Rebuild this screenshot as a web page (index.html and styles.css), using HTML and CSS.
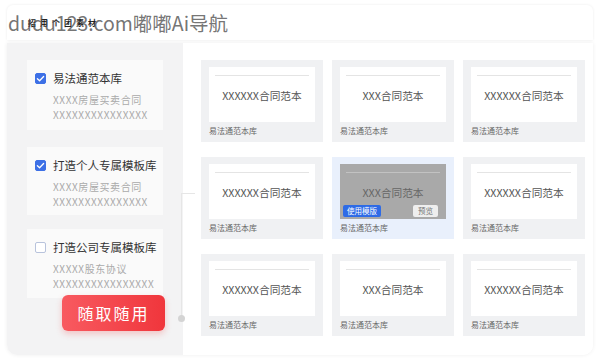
FILE: index.html
```html
<!DOCTYPE html>
<html lang="zh">
<head>
<meta charset="utf-8">
<link rel="stylesheet" href="styles.css">
</head>
<body>
<div class="app">
  <div class="header">
    <span class="htitle">招用个团素材</span>
    <span class="watermark">dudu123.com嘟嘟Ai导航</span>
  </div>
  <div class="main">
    <div class="left">
      <div class="card">
        <div class="ctitle"><span class="cb on"><svg viewBox="0 0 12 12" width="11" height="11"><path d="M2.6 6.2 L5 8.4 L9.4 3.8" fill="none" stroke="#fff" stroke-width="1.4" stroke-linecap="round" stroke-linejoin="round"/></svg></span>易法通范本库</div>
        <div class="csub">XXXX房屋买卖合同</div>
        <div class="csub">XXXXXXXXXXXXXXX</div>
      </div>
      <div class="card">
        <div class="ctitle"><span class="cb on"><svg viewBox="0 0 12 12" width="11" height="11"><path d="M2.6 6.2 L5 8.4 L9.4 3.8" fill="none" stroke="#fff" stroke-width="1.4" stroke-linecap="round" stroke-linejoin="round"/></svg></span>打造个人专属模板库</div>
        <div class="csub">XXXX房屋买卖合同</div>
        <div class="csub">XXXXXXXXXXXXXXX</div>
      </div>
      <div class="card">
        <div class="ctitle"><span class="cb"></span>打造公司专属模板库</div>
        <div class="csub">XXXXX股东协议</div>
        <div class="csub">XXXXXXXXXXXXXXXX</div>
      </div>
      <div class="btn">随取随用</div>
    </div>
    <div class="right">
      <div class="grid">
        <div class="tile"><div class="paper"><div class="pline"></div><div class="ptext">XXXXXX合同范本</div></div><div class="cap">易法通范本库</div></div>
        <div class="tile"><div class="paper"><div class="pline"></div><div class="ptext">XXX合同范本</div></div><div class="cap">易法通范本库</div></div>
        <div class="tile"><div class="paper"><div class="pline"></div><div class="ptext">XXXXXX合同范本</div></div><div class="cap">易法通范本库</div></div>
        <div class="tile"><div class="paper"><div class="pline"></div><div class="ptext">XXXXXX合同范本</div></div><div class="cap">易法通范本库</div></div>
        <div class="tile active"><div class="paper"><div class="pline"></div><div class="ptext">XXX合同范本</div><div class="acts"><span class="use">使用模版</span><span class="pre">预览</span></div></div><div class="cap">易法通范本库</div></div>
        <div class="tile"><div class="paper"><div class="pline"></div><div class="ptext">XXXXXX合同范本</div></div><div class="cap">易法通范本库</div></div>
        <div class="tile"><div class="paper"><div class="pline"></div><div class="ptext">XXXXXX合同范本</div></div><div class="cap">易法通范本库</div></div>
        <div class="tile"><div class="paper"><div class="pline"></div><div class="ptext">XXX合同范本</div></div><div class="cap">易法通范本库</div></div>
        <div class="tile"><div class="paper"><div class="pline"></div><div class="ptext">XXXXXX合同范本</div></div><div class="cap">易法通范本库</div></div>
      </div>
    </div>
    <div class="connector"><span class="dot"></span></div>
  </div>
</div>
</body>
</html>
```
FILE: styles.css
```css
* { box-sizing: border-box; }
html, body { margin: 0; padding: 0; background: #fff; }
body { font-family: "Noto Sans CJK SC", "Noto Sans", sans-serif; width: 600px; height: 360px; overflow: hidden; }
.app { width: 586px; margin: 5px 0 0 7px; }
.header {
  position: relative;
  height: 35px;
  background: #fff;
  border-radius: 6px 6px 0 0;
  box-shadow: 0 0 3px rgba(0,0,0,0.08);
  padding: 13px 0 0 21px;
}
.htitle { font-size: 8px; font-weight: 700; color: #222; letter-spacing: 4px; line-height: 10px; display: block; }
.watermark {
  position: absolute; left: 1px; top: 4px;
  font-family: "Noto Sans CJK SC", sans-serif;
  font-size: 19.5px; color: rgba(80,80,80,0.8); line-height: 28px; white-space: nowrap;
}
.main {
  position: relative;
  margin-top: 3px;
  height: 312px;
  display: flex;
  box-shadow: 0 0 4px rgba(0,0,0,0.07);
  border-radius: 0 0 10px 10px;
}
.left {
  width: 176px;
  background: #f3f3f4;
  border-radius: 0 0 0 10px;
  padding: 17px 0 0 20px;
  display: flex; flex-direction: column;
}
.card {
  width: 136px;
  background: #fafafa;
  padding: 10px 0 0 8px;
  margin-bottom: 17px;
}
.card:nth-child(1) { height: 70px; }
.card:nth-child(2) { height: 68px; margin-bottom: 14px; }
.card:nth-child(3) { height: 69px; margin-bottom: 0; }
.ctitle { display: flex; align-items: center; font-size: 11.5px; color: #333; line-height: 16px; margin-bottom: 6px; }
.cb { width: 11px; height: 11px; border-radius: 2px; border: 1px solid #b8c3dc; background: #fff; margin-right: 7px; display: inline-flex; flex: none; }
.cb.on { background: #3d70e6; border-color: #3d70e6; }
.cb svg { margin: -1px; }
.csub { font-size: 10px; color: #aaa; line-height: 15px; padding-left: 18px; letter-spacing: 0.6px; white-space: nowrap; }
.btn {
  margin: -3px 0 0 35px;
  width: 103px; height: 36px;
  border-radius: 6px;
  background: linear-gradient(90deg, #f85a60, #f0363c);
  box-shadow: 0 3px 6px rgba(240,60,60,0.25);
  color: #fff; font-size: 16px; letter-spacing: 2px;
  display: flex; align-items: center; justify-content: center;
  position: relative;
}
.right {
  flex: 1;
  background: #fff;
  border-radius: 0 0 10px 0;
  padding: 17px 8px 0 18px;
}
.grid {
  display: grid;
  grid-template-columns: repeat(3, 122px);
  grid-template-rows: repeat(3, 82px);
  column-gap: 9px; row-gap: 15px;
}
.tile { background: #f0f1f3; padding: 7px 8px 0; }
.tile.active { background: #e9f0fc; }
.paper { position: relative; background: #fff; height: 55px; padding: 8px 6px 0; }
.pline { height: 1px; background: #e4e4e4; }
.ptext { text-align: center; font-size: 10.7px; color: #555; margin-top: 13px; line-height: 14px; }
.cap { font-size: 8px; color: #666; margin-top: 4px; line-height: 10px; }
.active .paper { background: #a9a9a9; }
.active .pline { background: #c2c2c2; }
.active .ptext { color: #666; }
.acts { position: absolute; left: 3px; right: 8px; bottom: 2px; display: flex; justify-content: space-between; }
.use { background: #2e6be6; color: #fff; font-size: 7.5px; line-height: 12px; padding: 0 4px; border-radius: 2px; }
.pre { background: #eee; color: #777; font-size: 7.5px; line-height: 12px; padding: 0 5px; border-radius: 2px; }
.connector {
  position: absolute; left: 174px; top: 150px;
  width: 14px; height: 125px;
  border-top: 1px solid #e6e6e6; border-left: 1px solid #e6e6e6;
}
.dot { position: absolute; left: -4px; bottom: -4px; width: 7px; height: 7px; border-radius: 50%; background: #d4d4d4; }
```
